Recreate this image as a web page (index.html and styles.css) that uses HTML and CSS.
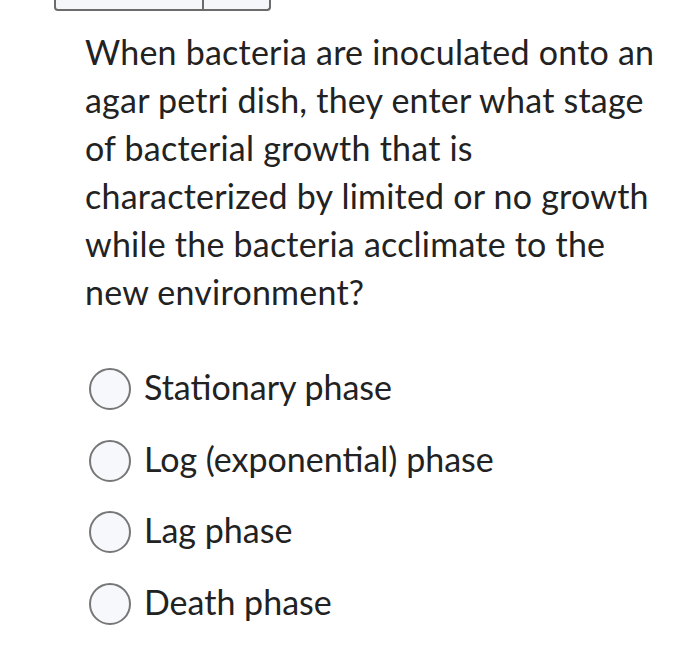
FILE: index.html
```html
<!DOCTYPE html>
<html>
<head>
<meta charset="utf-8">
<link rel="stylesheet" href="styles.css">
</head>
<body>
<div class="tabs"><div class="tab tab-wide"></div><div class="tab tab-narrow"></div></div>
<div class="question">When bacteria are inoculated onto an agar petri dish, they enter what stage of bacterial growth that is characterized by limited or no growth while the bacteria acclimate to the new environment?</div>
<div class="options">
  <label class="option"><span class="radio"></span><span class="label">Stationary phase</span></label>
  <label class="option"><span class="radio"></span><span class="label">Log (exponential) phase</span></label>
  <label class="option"><span class="radio"></span><span class="label">Lag phase</span></label>
  <label class="option"><span class="radio"></span><span class="label">Death phase</span></label>
</div>
</body>
</html>
```
FILE: styles.css
```css
html, body { margin: 0; padding: 0; background: #fff; }
body {
  width: 700px;
  height: 653px;
  font-family: Lato, "Open Sans", sans-serif;
  color: #222;
  overflow: hidden;
}
.tabs {
  margin-left: 54px;
  width: 217px;
  height: 11px;
  display: flex;
  box-sizing: border-box;
  border: 2px solid #6b6b6b;
  border-top: none;
  border-radius: 0 0 4px 4px;
  background: #f5f6fa;
}
.tab-wide { width: 146px; border-right: 2px solid #6b6b6b; }
.tab-narrow { flex: 1; }
.question {
  margin: 17px 0 0 85px;
  width: 590px;
  font-size: 34px;
  line-height: 48px;
  letter-spacing: 0.22px;
}
.options {
  margin: 52px 0 0 89px;
  display: flex;
  flex-direction: column;
  gap: 29.5px;
}
.option {
  display: flex;
  align-items: center;
  gap: 13px;
  height: 42px;
}
.radio {
  width: 42px;
  height: 42px;
  box-sizing: border-box;
  border: 2px solid #777;
  border-radius: 50%;
  background: #f7f8fc;
}
.label { font-size: 34px; line-height: 42px; position: relative; top: -2px; }
```
